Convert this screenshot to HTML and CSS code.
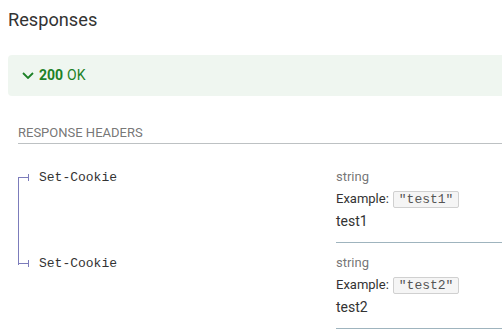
FILE: index.html
```html
<!DOCTYPE html>
<html lang="en">
<head>
  <meta charset="UTF-8">
  <title>Responses</title>
  <link rel="stylesheet" href="styles.css">
</head>
<body>
  <div class="responses">
    <h3 class="title">Responses</h3>

    <div class="response-btn">
      <svg class="chevron" width="12" height="7" viewBox="0 0 12 7">
        <path d="M1 1l5 5 5-5" fill="none" stroke="#1d8127" stroke-width="1.8"/>
      </svg>
      <strong>200</strong> OK
    </div>

    <div class="response-body">
      <h5 class="headers-title">Response Headers</h5>

      <div class="props">
        <div class="prop first">
          <div class="prop-name"><span class="bullet"></span>Set-Cookie</div>
          <div class="prop-details">
            <div class="type">string</div>
            <div class="example"><span class="label">Example:</span><code>"test1"</code></div>
            <div class="desc">test1</div>
          </div>
        </div>

        <div class="prop last">
          <div class="prop-name"><span class="bullet"></span>Set-Cookie</div>
          <div class="prop-details">
            <div class="type">string</div>
            <div class="example"><span class="label">Example:</span><code>"test2"</code></div>
            <div class="desc">test2</div>
          </div>
        </div>
      </div>
    </div>
  </div>
</body>
</html>
```

FILE: styles.css
```css
body {
  margin: 0;
  font-family: Roboto, "Liberation Sans", sans-serif;
  font-size: 14px;
  line-height: 20px;
  color: #333;
  background: #fff;
  overflow: hidden;
}
.responses {
  padding: 0 0 0 8px;
}
.title {
  margin: 0;
  padding-top: 8px;
  font-size: 18.2px;
  font-weight: 400;
  line-height: 24px;
  color: #333;
}
.response-btn {
  display: flex;
  align-items: center;
  margin-top: 23px;
  padding: 10px 14px;
  line-height: 21px;
  background-color: rgba(29, 129, 39, 0.07);
  color: #1d8127;
  border-radius: 4px 0 0 4px;
}
.chevron {
  margin-right: 5px;
}
.response-btn strong {
  margin-right: 4px;
}
.response-body {
  padding-left: 10px;
}
.headers-title {
  margin: 27px 0 13px;
  font-size: 13px;
  font-weight: 400;
  line-height: 20px;
  text-transform: uppercase;
  color: rgba(102, 102, 102, 0.9);
  border-bottom: 1px solid rgba(38, 50, 56, 0.3);
}
.prop {
  display: grid;
  grid-template-columns: 318px 1fr;
}
.prop-name {
  padding: 11px 10px 10px 0;
  font-family: "Liberation Mono", Courier, monospace;
  font-size: 13px;
  line-height: 20px;
  white-space: nowrap;
  background-repeat: no-repeat;
  background-size: 1px 100%;
}
.prop.first .prop-name {
  background-image: linear-gradient(to bottom, transparent 21px, #7c7cbb 21px);
}
.prop.last .prop-name {
  background-image: linear-gradient(to bottom, #7c7cbb 22px, transparent 22px);
}
.bullet {
  margin-right: 10px;
}
.bullet::before {
  content: '';
  display: inline-block;
  vertical-align: middle;
  width: 10px;
  height: 1px;
  background: #7c7cbb;
}
.bullet::after {
  content: '';
  display: inline-block;
  vertical-align: middle;
  width: 1px;
  height: 7px;
  background: #7c7cbb;
}
.prop-details {
  padding: 10px 0 11px;
  border-bottom: 1px solid #9fb4be;
}
.type {
  font-size: 13px;
  color: rgba(102, 102, 102, 0.9);
}
.example {
  line-height: 23px;
}
.label {
  font-size: 13px;
  margin-right: 4px;
}
.example code {
  font-family: "Liberation Mono", Courier, monospace;
  font-size: 13px;
  color: #555;
  padding: 0 5px;
  background-color: rgba(51, 51, 51, 0.05);
  border: 1px solid rgba(0, 0, 0, 0.15);
  border-radius: 2px;
}
.desc {
  color: #333;
}
```
